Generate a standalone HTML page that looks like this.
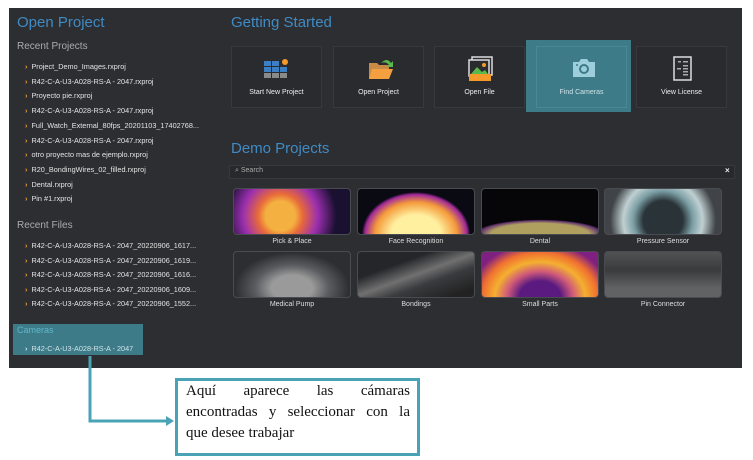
<!DOCTYPE html><html><head><style>
*{margin:0;padding:0;box-sizing:border-box}
body{width:753px;height:460px;background:#fff;position:relative;overflow:hidden;font-family:"Liberation Sans",sans-serif}
#app{position:absolute;left:9px;top:8px;width:733px;height:360px;background:#2d2e32}
.a{position:absolute;white-space:nowrap}
.h1{color:#3f8bc4;font-size:15px}
.h2{color:#a9abae;font-size:10px}
.it{color:#e4e4e4;font-size:7.3px}
.it b{color:#f0a030;font-weight:bold;margin-right:4px}
.tile{position:absolute;top:38px;width:91px;height:62px;background:#2a2b2f;border:1px solid #38393d}
.tile span{position:absolute;bottom:11px;left:0;right:0;text-align:center;color:#eee;font-size:7px}
.th{position:absolute;width:118px;height:47px;border-radius:4px;border:1px solid #4a4b50;overflow:hidden}
.lb{position:absolute;width:118px;text-align:center;color:#ddd;font-size:7px}
.ln{text-align:justify;text-align-last:justify;height:21px}
</style></head><body>
<div id="app">
<div class="a h1" style="left:8px;top:6px">Open Project</div>
<div class="a h2" style="left:8px;top:33px">Recent Projects</div>
<div class="a it" style="left:16px;top:52px;line-height:14.7px">
<div><b>›</b>Project_Demo_Images.rxproj</div><div><b>›</b>R42-C-A-U3-A028-RS-A - 2047.rxproj</div><div><b>›</b>Proyecto pie.rxproj</div><div><b>›</b>R42-C-A-U3-A028-RS-A - 2047.rxproj</div><div><b>›</b>Full_Watch_External_80fps_20201103_17402768...</div><div><b>›</b>R42-C-A-U3-A028-RS-A - 2047.rxproj</div><div><b>›</b>otro proyecto mas de ejemplo.rxproj</div><div><b>›</b>R20_BondingWires_02_filled.rxproj</div><div><b>›</b>Dental.rxproj</div><div><b>›</b>Pin #1.rxproj</div></div>
<div class="a h2" style="left:8px;top:212px">Recent Files</div>
<div class="a it" style="left:16px;top:231px;line-height:14.6px">
<div><b>›</b>R42-C-A-U3-A028-RS-A - 2047_20220906_1617...</div><div><b>›</b>R42-C-A-U3-A028-RS-A - 2047_20220906_1619...</div><div><b>›</b>R42-C-A-U3-A028-RS-A - 2047_20220906_1616...</div><div><b>›</b>R42-C-A-U3-A028-RS-A - 2047_20220906_1609...</div><div><b>›</b>R42-C-A-U3-A028-RS-A - 2047_20220906_1552...</div></div>
<div class="a" style="left:4px;top:316px;width:130px;height:31px;background:#3e7b89"></div>
<div class="a" style="left:8px;top:317px;color:#5fb6c9;font-size:9px">Cameras</div>
<div class="a it" style="left:16px;top:336px;color:#cfe3e8"><b style="color:#cfe3e8">›</b>R42-C-A-U3-A028-RS-A - 2047</div>

<div class="a h1" style="left:222px;top:6px">Getting Started</div>
<div class="tile" style="left:222px"><svg style="position:absolute;left:32px;top:11px" width="28" height="22"><g fill="#3d7fc4"><rect x="0" y="3" width="7" height="5"/><rect x="8" y="3" width="7" height="5"/><rect x="0" y="9" width="7" height="5"/><rect x="8" y="9" width="7" height="5"/><rect x="16" y="9" width="7" height="5"/></g><g fill="#8a8a8a"><rect x="0" y="15" width="7" height="5"/><rect x="8" y="15" width="7" height="5"/><rect x="16" y="15" width="7" height="5"/></g><circle cx="21" cy="4" r="3" fill="#f39a2a"/></svg><span>Start New Project</span></div>
<div class="tile" style="left:324px"><svg style="position:absolute;left:33px;top:10px" width="28" height="24"><path d="M2 6h8l2 2h10v14H2z" fill="#c98a45"/><path d="M5 12h21l-4 10H2z" fill="#f4a040"/><path d="M14 6q6-6 10 0l2-2v6h-6l2-2q-3-4-8-2z" fill="#5bb84a"/></svg><span>Open Project</span></div>
<div class="tile" style="left:425px"><svg style="position:absolute;left:33px;top:9px" width="28" height="26"><rect x="4" y="1" width="20" height="18" fill="none" stroke="#ddd" stroke-width="1.5"/><rect x="1" y="4" width="20" height="16" fill="#2a2b2f" stroke="#ddd" stroke-width="1.5"/><path d="M3 18l6-7 5 5 3-2 3 4z" fill="#5bb84a"/><circle cx="16" cy="9" r="2" fill="#f39a2a"/><rect x="1" y="18" width="22" height="7" fill="#f39a2a"/></svg><span>Open File</span></div>
<div class="a" style="left:517px;top:32px;width:105px;height:72px;background:#3e7b89"></div>
<div class="tile" style="left:527px;background:#3e7b89;border-color:#4a8896"><svg style="position:absolute;left:34px;top:10px" width="26" height="22"><path d="M2 5h6l2-3h6l2 3h6v15H2z" fill="#9ccfdb"/><circle cx="13" cy="12" r="5" fill="#3e7b89"/><circle cx="13" cy="12" r="3" fill="#9ccfdb"/><circle cx="6" cy="8" r="1" fill="#3e7b89"/></svg><span style="color:#cfe3e8">Find Cameras</span></div>
<div class="tile" style="left:627px"><svg style="position:absolute;left:36px;top:9px" width="20" height="26"><rect x="1" y="1" width="17" height="23" fill="none" stroke="#ddd" stroke-width="1.5"/><g fill="#aaa"><rect x="5" y="5" width="3" height="1.5"/><rect x="10" y="5" width="5" height="1.5"/><rect x="10" y="9" width="5" height="1.5"/><rect x="4" y="12" width="4" height="1.5"/><rect x="10" y="12" width="5" height="1.5"/><rect x="10" y="15" width="5" height="1.5"/><rect x="10" y="18" width="5" height="1.5"/></g></svg><span>View License</span></div>

<div class="a h1" style="left:222px;top:132px">Demo Projects</div>
<div class="a" style="left:220px;top:157px;width:506px;height:14px;background:#28292c;border:1px solid #37383c"></div>
<div class="a" style="left:226px;top:159px;color:#aaa;font-size:7px">⌕ Search</div>
<div class="a" style="left:716px;top:158px;color:#eee;font-size:8px;font-weight:bold">×</div>

<div class="th" style="left:224px;top:180px;background:radial-gradient(circle at 40% 60%,#f4b040 0 20%,#e86a3a 30%,#9b2fb0 50%,#1a1030 75%)"></div>
<div class="th" style="left:348px;top:180px;background:radial-gradient(ellipse at 50% 100%,#fff0a0 0 30%,#f49a3a 50%,#a02a9a 62%,#0a0a12 66%)"></div>
<div class="th" style="left:472px;top:180px;background:radial-gradient(ellipse 70% 40% at 50% 100%,#b0a060 0 60%,#603070 75%,#060608 80%)"></div>
<div class="th" style="left:595px;top:180px;background:radial-gradient(circle at 50% 70%,#2a3438 0 30%,#7a9ea4 45%,#c0d0d2 60%,#404448 80%)"></div>
<div class="lb" style="left:224px;top:230px">Pick &amp; Place</div>
<div class="lb" style="left:348px;top:230px">Face Recognition</div>
<div class="lb" style="left:472px;top:230px">Dental</div>
<div class="lb" style="left:595px;top:230px">Pressure Sensor</div>
<div class="th" style="left:224px;top:243px;background:radial-gradient(ellipse at 50% 80%,#9a9a9a 0 25%,#5a5c60 45%,#2c2e32 70%)"></div>
<div class="th" style="left:348px;top:243px;background:linear-gradient(160deg,#252629 30%,#707070 50%,#3a3b3e 65%,#222 90%)"></div>
<div class="th" style="left:472px;top:243px;background:radial-gradient(ellipse at 50% 100%,#5a1a80 0 25%,#d05a7a 40%,#f4b030 55%,#f07030 70%,#802080 85%)"></div>
<div class="th" style="left:595px;top:243px;background:linear-gradient(180deg,#505254,#3a3b3d 40%,#606264 80%)"></div>
<div class="lb" style="left:224px;top:293px">Medical Pump</div>
<div class="lb" style="left:348px;top:293px">Bondings</div>
<div class="lb" style="left:472px;top:293px">Small Parts</div>
<div class="lb" style="left:595px;top:293px">Pin Connector</div>
</div>
<svg class="a" style="left:0;top:0" width="753" height="460"><path d="M90 356V421H168" fill="none" stroke="#4aa3b5" stroke-width="3"/><path d="M166 416l8 5-8 5z" fill="#4aa3b5"/></svg>
<div class="a" style="left:175px;top:378px;width:245px;height:78px;border:3px solid #4aa3b5;background:#fff"></div>
<div class="a" style="left:186px;top:381px;width:224px;font-family:'Liberation Serif',serif;font-size:15px;line-height:21px;color:#111;white-space:nowrap">
<div class="ln">Aquí aparece las cámaras</div>
<div class="ln" style="word-spacing:-1px">encontradas y seleccionar con la</div>
<div>que desee trabajar</div></div>
</body></html>
